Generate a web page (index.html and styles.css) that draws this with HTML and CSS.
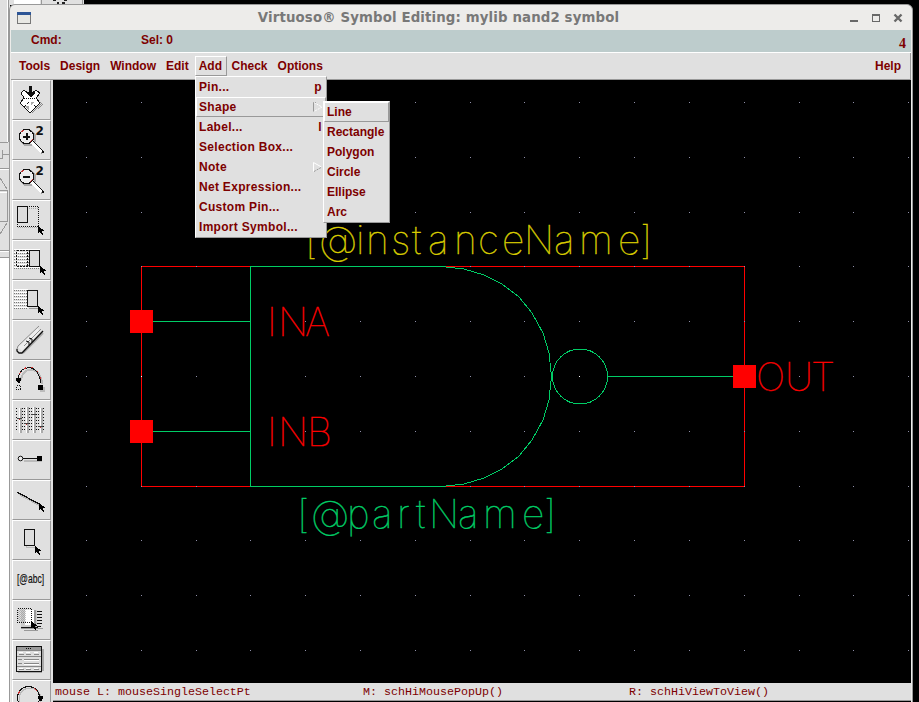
FILE: index.html
```html
<!DOCTYPE html>
<html lang="en">
<head>
    <meta charset="UTF-8">
    <title>Virtuoso Symbol Editing</title>
    <link rel="stylesheet" href="styles.css">
</head>
<body>
    <svg class="defs" width="0" height="0">
        <defs>
            <path id="cursor" d="M0 0v7l2-1 2 3 1-1-1-3h3z"/>
            <pattern id="dither" width="2" height="2" patternUnits="userSpaceOnUse">
                <rect width="1" height="1" fill="#888"/><rect x="1" y="1" width="1" height="1" fill="#888"/>
            </pattern>
            <pattern id="scan" width="2" height="3" patternUnits="userSpaceOnUse">
                <rect width="2" height="1" fill="#fff"/><rect y="1" width="1" height="1" fill="#777"/>
            </pattern>
            <g id="lens">
                <circle cx="16" cy="18" r="7.5" fill="none" stroke="#aaa" stroke-width="2"/>
                <circle cx="14.5" cy="16.5" r="7.2" fill="#eee" stroke="#111" stroke-width="1.4"/>
                <path d="M9 12l3-2M18 22l3-3" stroke="#b33"/>
                <path d="M20 22l11 11" stroke="#999" stroke-width="4"/>
                <path d="M20 22l10 10" stroke="#fff" stroke-width="3"/>
                <path d="M21 21l10 10v2" stroke="#111" stroke-width="1.3" fill="none"/>
                <text x="23.5" y="15" class="two">2</text>
            </g>
        </defs>
    </svg>

    <div class="desktop">
        <div class="behind">
            <svg width="84" height="702" shape-rendering="crispEdges">
                <path fill="#e0e0e0" d="M0 0h84v5H10v697H0z"/>
                <path fill="#fff" d="M14 0h26v4H14zM0 258h9v444H0z"/>
                <path fill="#222" d="M53 0h3v1h-3zM57 2h2v2h-2zM64 0h3v1h-3zM62 2h3v2h-3z"/>
                <path stroke="#999" fill="none" d="M8.5 0v142M41.5 0v4M82.5 0v4M0 142.5h8M0 158.5h2M2.5 150v9M2 154.5h7M0 168.5h9M0 190.5h8M0 221.5h8M7.5 191v30M0 178l7 11M0 234l7-11M0 250.5h9M0 257.5h9"/>
                <path stroke="#fff" d="M7.5 0v142M0 169.5h9M0 192.5h7M0 251.5h9"/>
            </svg>
        </div>
        <div class="window">
            <div class="titlebar">
                <svg class="winicon" width="14" height="12" shape-rendering="crispEdges"><rect x=".5" y=".5" width="13" height="11" fill="#e8e8e4" stroke="#777"/><path fill="#2d5596" d="M0 0h14v3H0z"/></svg>
                <span class="title">Virtuoso® Symbol Editing: mylib nand2 symbol</span>
                <svg class="controls" width="54" height="10" fill="none" stroke="#686868" shape-rendering="crispEdges">
                    <path stroke-width="2" d="M0 8h8"/>
                    <rect x="22.5" y="1.5" width="7" height="7"/><path d="M22 2.5h8"/>
                    <path stroke-width="2.4" shape-rendering="auto" d="M44.5 1.5l7 7m0-7l-7 7"/>
                </svg>
            </div>
            <div class="infobar">
                <span class="cmd">Cmd:</span><span>Sel: 0</span><span class="winnum">4</span>
            </div>
            <div class="menubar">
                <span class="item">Tools</span><span class="item">Design</span><span class="item">Window</span><span class="item">Edit</span><span class="item open">Add</span><span class="item">Check</span><span class="item">Options</span><span class="item help">Help</span>
            </div>
            <div class="main">
                <div class="toolbar">
                    <div class="tool"><svg>
                        <path fill="url(#dither)" d="M20 34l11-9-2-4-10 9z"/>
                        <path fill="#fff" stroke="#111" d="M9 13l3-3 6 5 6-5 4 3-4 5 4 5-4 4-6 6-6-6-4-4 4-5z"/>
                        <path fill="none" stroke="#111" stroke-dasharray="1 1" d="M12 18h12M12 27l6-6 6 6"/>
                        <path fill="#aaa" d="M13 26h4v5zM19 22h3l-3 3z"/>
                        <path fill="#111" d="M17 6h3v6h3v1l-4 5-5-5v-1h3z"/>
                    </svg></div>
                    <div class="tool"><svg><use href="#lens"/><path stroke="#111" stroke-width="2" d="M11 17h7M14.5 13v7"/></svg></div>
                    <div class="tool"><svg><use href="#lens"/><path stroke="#111" stroke-width="2" d="M11 17h7"/></svg></div>
                    <div class="tool"><svg>
                        <path fill="none" stroke="#aaa" stroke-dasharray="1 1" d="M6 27.5h20M17 8.5h9"/>
                        <path fill="none" stroke="#111" stroke-dasharray="1 1" d="M5.5 24v2.5h20M17 6.5h9.5v19"/>
                        <rect x="5.5" y="6.5" width="10" height="16" fill="#ddd" stroke="#111"/>
                        <use href="#cursor" x="26" y="26"/>
                    </svg></div>
                    <div class="tool"><svg>
                        <rect x="2" y="9" width="26" height="21" fill="url(#scan)"/>
                        <rect x="4.5" y="10.5" width="11" height="16" fill="none" stroke="#111" stroke-dasharray="2 1"/>
                        <rect x="17.5" y="10.5" width="10" height="16" fill="#ddd" stroke="#111"/>
                        <use href="#cursor" x="28" y="26"/>
                    </svg></div>
                    <div class="tool"><svg>
                        <rect x="2" y="9" width="14" height="21" fill="url(#scan)"/>
                        <path stroke="#999" d="M17 28.5h9"/>
                        <rect x="15.5" y="10.5" width="10" height="16" fill="#ddd" stroke="#111"/>
                        <use href="#cursor" x="26" y="26"/>
                    </svg></div>
                    <div class="tool"><svg class="smooth">
                        <path stroke="#aaa" stroke-width="2" d="M11 33L31 13"/>
                        <path stroke="#eee" stroke-width="5" d="M8 29L27 10"/>
                        <path stroke="#777" fill="none" stroke-width=".8" d="M27 6L6 26l-1 3M29 9L12 26"/>
                        <path stroke="#111" stroke-width="1.3" fill="none" d="M5 29v2l2 2h3L31 11"/>
                        <path stroke="#111" fill="none" d="M14 21l3 1v3M17 18l3 1v3"/>
                    </svg></div>
                    <div class="tool"><svg>
                        <path fill="none" stroke="#bbb" stroke-width="2" d="M9 20c2-15 20-14 21 4"/>
                        <path fill="none" stroke="#111" d="M6.5 18c1-14 21-15 22 5"/>
                        <path fill="none" stroke="#c33" stroke-dasharray="2 5" d="M7.5 14c4-10 19-9 21 5"/>
                        <path d="M4 18h5v2l-1 3H6l-2-3z"/>
                        <rect x="4.5" y="25.5" width="4" height="4" fill="none" stroke="#111" stroke-dasharray="1 1"/>
                        <path fill="#bbb" d="M28 27h5v5h-5z"/><path d="M26 25h5v5h-5z"/>
                    </svg></div>
                    <div class="tool"><svg>
                        <path stroke="#aaa" stroke-width="3" d="M8.5 8v25M15.5 7v26M22.5 7v26M29.5 8v25"/>
                        <path stroke="#fff" d="M7.5 8v25M14.5 7v26M21.5 7v26M28.5 8v25"/>
                        <path stroke="#111" stroke-dasharray="1 2" d="M4.5 8v24M10.5 8v24M12.5 8v24M17.5 8v24M19.5 8v24M24.5 8v24M26.5 8v24M31.5 8v24"/>
                        <path stroke="#444" d="M5 18.5h5M12 23.5h5M19 14.5h5M26 26.5h5"/>
                        <path fill="#c33" d="M7 19h1v1h-1zM14 24h1v1h-1zM28 27h1v1h-1z"/>
                    </svg></div>
                    <div class="tool"><svg>
                        <path stroke="#bbb" stroke-width="2" d="M12 21h18"/>
                        <circle cx="8.5" cy="18.5" r="2.3" fill="#eee" stroke="#111" shape-rendering="auto"/>
                        <path stroke="#111" d="M11 18.5h15"/><path d="M25 16h5v5h-5z"/>
                    </svg></div>
                    <div class="tool"><svg>
                        <path stroke="#bbb" stroke-width="2" d="M7 14l20 11"/><path stroke="#111" stroke-width="1.3" d="M5 12l22 12"/>
                        <use href="#cursor" x="27" y="23"/>
                    </svg></div>
                    <div class="tool"><svg>
                        <path fill="none" stroke="#bbb" d="M14.5 12v15.5h9"/>
                        <rect x="12.5" y="9.5" width="10" height="16" fill="#ddd" stroke="#111"/>
                        <use href="#cursor" x="23" y="26"/>
                    </svg></div>
                    <div class="tool"><svg><text class="abc" x="5" y="23" textLength="27" lengthAdjust="spacingAndGlyphs">[@abc]</text></svg></div>
                    <div class="tool"><svg>
                        <path stroke="#111" d="M24 11.5h6M24 14.5h6M24 17.5h6M24 20.5h6M24 23.5h6M24 26.5h5"/>
                        <path stroke="#999" d="M9 28.5h17M12 30.5h14M26 28.5h5"/><path stroke="#111" d="M9 27.5h17"/>
                        <path fill="#ccc" d="M9 10h16v17H9z"/><path fill="#fff" d="M13 10h9v15h-9z"/><path fill="#999" d="M22 10h2v17h-2z"/>
                        <path fill="url(#dither)" opacity=".5" d="M6 9h8v13H6z"/>
                        <rect x="5.5" y="8.5" width="14" height="14" fill="none" stroke="#111" stroke-dasharray="1 1"/>
                        <use href="#cursor" x="19" y="21"/>
                    </svg></div>
                    <div class="tool"><svg>
                        <path fill="#aaa" d="M6 31h26V9h-2v24H6z"/>
                        <rect x="4.5" y="6.5" width="25" height="25" fill="#ddd" stroke="#111"/>
                        <path fill="#999" d="M5 7h24v3H5z"/><path stroke="#111" stroke-dasharray="1 1" d="M14 8.5h6"/>
                        <path stroke="#888" d="M5 10.5h24M7 14.5h5M14 14.5h5M22 14.5h5M5 16.5h24M6 19.5h4M12 19.5h15M6 23.5h4M12 23.5h15M5 26.5h24M7 29.5h5M14 29.5h5M22 29.5h5"/>
                        <path stroke="#fff" d="M7 12.5h4M14 12.5h4M22 12.5h4M12 20.5h15M12 24.5h15M7 28.5h4M14 28.5h4M22 28.5h4"/>
                    </svg></div>
                    <div class="tool"><svg>
                        <circle cx="18" cy="19" r="11" fill="none" stroke="#bbb"/>
                        <circle cx="16.5" cy="17.5" r="11" fill="none" stroke="#111"/>
                        <path stroke="#c33" d="M6 14l2-3M22 8l3 3"/><path d="M26 16h5v2l-2 4-3-4z"/>
                    </svg></div>
                </div>
                <div class="canvas">
                    <svg id="schematic" width="858" height="603" viewBox="53 80 858 603" fill="none" shape-rendering="crispEdges">
                        <rect x="141.5" y="266.5" width="603" height="220" stroke="#f00"/>
                        <g id="grid" fill="#8f8fa8"></g>
                        <g stroke="#00cc66">
                            <path d="M442 266.5H250.5v220H442l22-2.500 20-6 18-9 17-13 13-16 11-20 6-20 2.500-23.500-2.500-23.500-6-20-11-20-13-16-17-13-18-9-20-6z" stroke-linejoin="round"/>
                            <circle cx="580" cy="376.5" r="27.5"/>
                            <path d="M153 321.5h98M153 431.5h98M608 376.5h126"/>
                        </g>
                        <path fill="#f00" d="M130 310h23v23h-23zM130 420h23v23h-23zM733 365h23v23h-23z"/>
                        <g class="lettering">
                            <text class="instance" y="253.500" x="305 319 356 366 391 412 428 454 478 502 524 554 579 618 640">[@instanceName]</text>
                            <text class="part" y="527.500" x="297 311 347 372 397 416 429 458 483 522 544">[@partName]</text>
                            <text class="pin" y="335.500" x="267 278 305">INA</text>
                            <text class="pin" y="445.500" x="267 278 307">INB</text>
                            <text class="pin" y="390.500" x="756 785 811">OUT</text>
                        </g>
                    </svg>
                    <div class="statusbar"><span>mouse L: mouseSingleSelectPt</span><span>M: schHiMousePopUp()</span><span>R: schHiViewToView()</span></div>
                </div>
            </div>
        </div>

        <div class="menu add-menu">
            <div class="row">Pin...<span>p</span></div>
            <div class="row active">Shape<svg width="9" height="10"><path stroke="#999" d="M3 .5H.5v9"/><path d="M1 .5l8 4.5-8 4.5" stroke="#fff" stroke-dasharray="2 1"/></svg></div>
            <div class="row">Label...<span>l</span></div>
            <div class="row">Selection Box...</div>
            <div class="row">Note<svg width="9" height="10"><path stroke="#fff" d="M.5 9.5v-9l8 4.5"/><path d="M1 9.5l8-4.5" stroke="#999" stroke-dasharray="2 1"/></svg></div>
            <div class="row">Net Expression...</div>
            <div class="row">Custom Pin...</div>
            <div class="row">Import Symbol...</div>
        </div>
        <div class="menu shape-menu">
            <div class="row active">Line</div>
            <div class="row">Rectangle</div>
            <div class="row">Polygon</div>
            <div class="row">Circle</div>
            <div class="row">Ellipse</div>
            <div class="row">Arc</div>
        </div>
    </div>

    <script>
        // snap grid, one dot every 54.8px
        const grid = document.getElementById('grid');
        for (let j = 0; j < 11; j++) {
            for (let i = 0; i < 16; i++) {
                const dot = document.createElementNS('http://www.w3.org/2000/svg', 'rect');
                dot.setAttribute('x', Math.floor(86.5 + 54.81 * i));
                dot.setAttribute('y', Math.floor(102.5 + 54.8 * j));
                dot.setAttribute('width', 1);
                dot.setAttribute('height', 1);
                if (j === 5 && (i === 1 || i === 9)) {
                    dot.setAttribute('fill', '#fff');
                }
                grid.appendChild(dot);
            }
        }
    </script>
</body>
</html>
```

FILE: styles.css
```css
body {
    margin: 0;
    background: #000;
    overflow: hidden;
    font: bold 12px/20px "Liberation Sans", Arial, sans-serif;
    color: #7d0000;
}
.defs {
    position: absolute;
}
.desktop {
    position: relative;
    width: 919px;
    height: 702px;
    overflow: hidden;
}
.behind {
    position: absolute;
    left: 0;
    top: 0;
}
.window {
    position: relative;
    box-sizing: border-box;
    width: 904px;
    height: 720px;
    margin-left: 9px;
    top: 4px;
    border: 1px solid #999;
    border-radius: 6px 6px 0 0;
    background: #edecea;
    padding: 0 1px;
    overflow: hidden;
}
.titlebar {
    display: flex;
    align-items: center;
    height: 25px;
    padding: 0 7px 0 6px;
}
.title {
    flex: 1;
    padding-right: 4px;
    text-align: center;
    font: bold 13.33px/25px "DejaVu Sans", sans-serif;
    letter-spacing: 0.13px;
    color: #787878;
    white-space: nowrap;
}
.infobar {
    display: flex;
    height: 22px;
    padding: 0 5px 0 20px;
    line-height: 21px;
    background: #bdcccc;
    border-bottom: 1px solid #fff;
}
.cmd {
    width: 110px;
}
.winnum {
    margin-left: auto;
    font: bold 14px/28px "Liberation Serif", serif;
}
.menubar {
    display: flex;
    box-sizing: border-box;
    height: 27px;
    padding: 3px 4px 2px 3px;
    background: #e0e0e0;
    border: 1px solid #999;
    border-width: 0 1px 1px 0;
}
.item {
    box-sizing: border-box;
    height: 20px;
    line-height: 18px;
    padding: 0 4px;
    border: 1px solid transparent;
    white-space: nowrap;
}
.item.open {
    margin-left: 1px;
    padding: 0 3.5px 0 3px;
    border-color: #fff #999 #999 #fff;
}
.help {
    margin-left: auto;
}
.main {
    display: flex;
}
.toolbar {
    width: 41px;
    padding-left: 1px;
    flex: none;
    background: #e0e0e0;
}
.tool {
    box-sizing: border-box;
    width: 39px;
    height: 40px;
    border: 1px solid;
    border-color: #fff #999 #999 #fff;
    background: #e0e0e0;
}
.tool svg {
    display: block;
    width: 39px;
    height: 40px;
    margin: -1px 0 0 -1px;
    shape-rendering: crispEdges;
    overflow: visible;
}
.tool svg.smooth {
    shape-rendering: auto;
}
.two {
    font: bold 12px "DejaVu Sans", sans-serif;
    fill: #111;
}
.abc {
    font: 13px "Liberation Sans", Arial, sans-serif;
    fill: #111;
    stroke: #111;
    stroke-width: 0.2px;
}
.canvas {
    width: 858px;
    background: #000;
}
.canvas svg {
    display: block;
}
.lettering {
    font: 100 39px Inter, Roboto, sans-serif;
    stroke-width: 0.4px;
}
.instance {
    fill: #d8cc00;
    stroke: #d8cc00;
}
.part {
    fill: #00cc66;
    stroke: #00cc66;
}
.pin {
    fill: #f00;
    stroke: #f00;
}
.statusbar {
    display: grid;
    grid-template-columns: 308px 266px 1fr;
    height: 17px;
    padding-left: 2px;
    background: #e0e0e0;
    border-bottom: 1px solid #999;
    font: 11.67px/18px "Liberation Mono", monospace;
    white-space: pre;
}
.menu {
    position: absolute;
    background: #e0e0e0;
    border: 1px solid;
    border-color: #fff #999 #999 #fff;
    box-sizing: border-box;
}
.menu .row {
    display: flex;
    justify-content: space-between;
    align-items: center;
    box-sizing: border-box;
    height: 20px;
    border: 1px solid transparent;
    line-height: 18px;
    white-space: nowrap;
}
.menu .row.active {
    border-color: #fff #999 #999 #fff;
}
.menu svg {
    fill: none;
}
.add-menu {
    left: 195px;
    top: 76px;
    width: 132px;
    height: 162px;
    letter-spacing: 0.3px;
}
.add-menu .row {
    padding: 0 3px 0 2px;
}
.shape-menu {
    left: 323px;
    top: 101px;
    width: 67px;
    height: 122px;
}
.shape-menu .row {
    padding-left: 2px;
}
```
